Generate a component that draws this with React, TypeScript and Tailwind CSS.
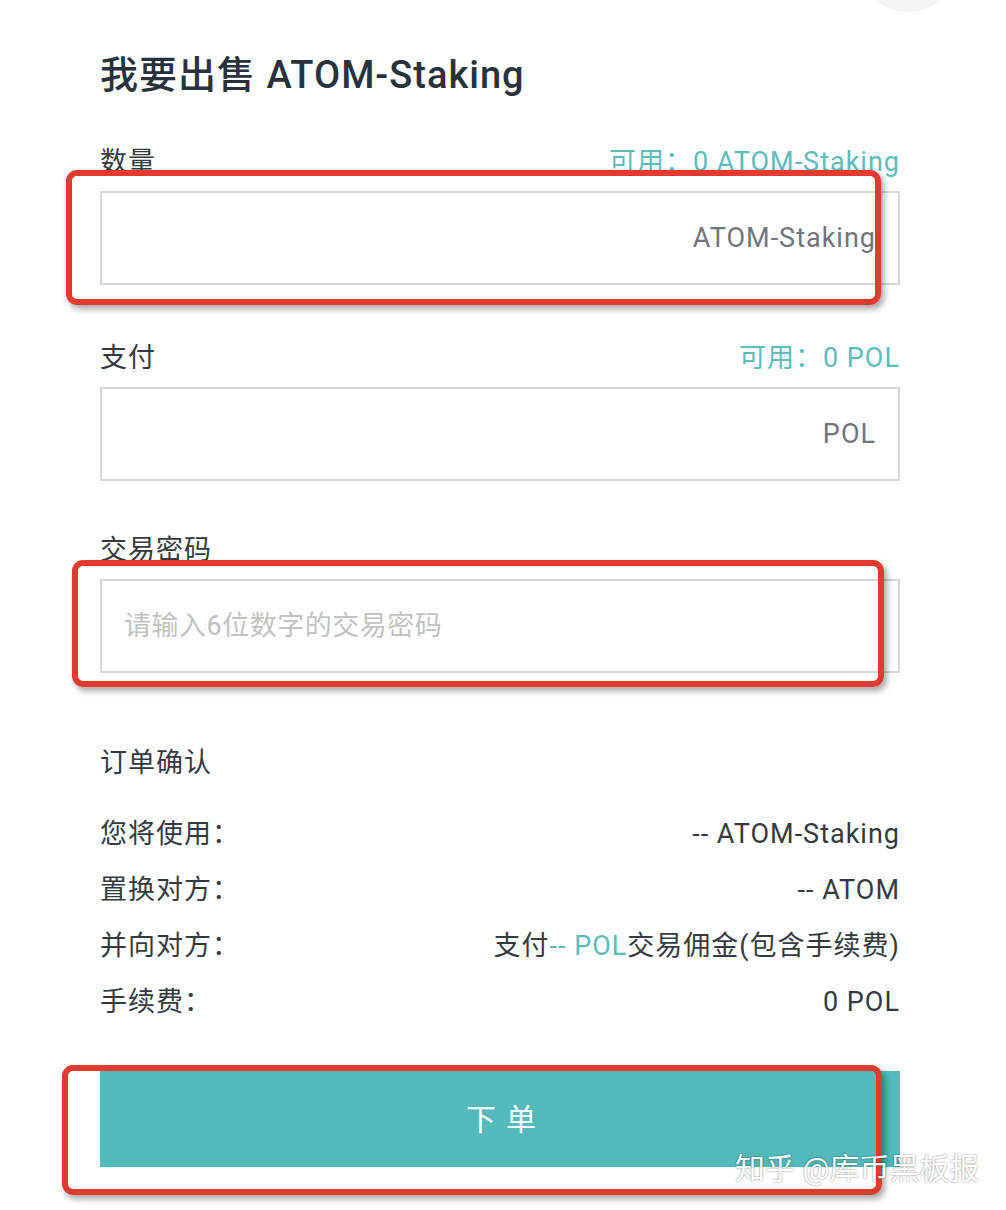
const font = { fontFamily: '"Roboto", "Noto Sans CJK SC", sans-serif' };

type FieldProps = {
  label: string;
  avail?: string;
  suffix?: string;
  placeholder?: string;
  className?: string;
};

function Field({ label, avail, suffix, placeholder, className }: FieldProps) {
  return (
    <div className={className}>
      <div className="flex h-[30px] items-center justify-between">
        <span className="text-[27px] tracking-[1px] text-[#333a40]">{label}</span>
        {avail && <span className="text-[27px] tracking-[1px] text-[#5dbcbc]">{avail}</span>}
      </div>
      <div className="mt-[14px] flex h-[94px] items-center border-2 border-[#d6d6d6] px-[22px]">
        {placeholder && <span className="text-[27px] tracking-[0.5px] text-[#c2c2c2]">{placeholder}</span>}
        {suffix && <span className="ml-auto text-[27px] tracking-[1px] text-[#6f757b]">{suffix}</span>}
      </div>
    </div>
  );
}

function Row({ label, children }: { label: string; children: React.ReactNode }) {
  return (
    <div className="flex h-[56px] items-center justify-between text-[27px] tracking-[1px] text-[#333a40]">
      <span>{label}</span>
      <span>{children}</span>
    </div>
  );
}

function Mark({ className }: { className: string }) {
  return (
    <div
      className={`pointer-events-none absolute rounded-[11px] border-[6px] border-[#e23b2e] shadow-[3px_4px_6px_rgba(0,0,0,0.35)] ${className}`}
    />
  );
}

export default function App() {
  return (
    <div className="relative h-[1210px] w-[1006px] overflow-hidden bg-white" style={font}>
      <div className="absolute left-[858px] top-[-88px] h-[100px] w-[100px] rounded-full bg-[#f3f4f5]" />

      <div className="relative w-[900px] pl-[100px] pt-[51px]">
        <h1 className="h-[48px] text-[38px] font-medium leading-[48px] tracking-[1px] text-[#28323c]">
          我要出售 ATOM-Staking
        </h1>

        <Field className="mt-[48px]" label="数量" avail="可用：0 ATOM-Staking" suffix="ATOM-Staking" />
        <Field className="mt-[58px]" label="支付" avail="可用：0 POL" suffix="POL" />
        <Field className="mt-[54px]" label="交易密码" placeholder="请输入6位数字的交易密码" />

        <div className="mt-[75px] flex h-[30px] items-center text-[27px] tracking-[1px] text-[#333a40]">订单确认</div>
        <div className="mt-[28px]">
          <Row label="您将使用：">-- ATOM-Staking</Row>
          <Row label="置换对方：">-- ATOM</Row>
          <Row label="并向对方：">
            支付<span className="text-[#5dbcbc]">-- POL</span>交易佣金(包含手续费)
          </Row>
          <Row label="手续费：">0 POL</Row>
        </div>

        <button className="mt-[41px] flex h-[96px] w-full items-center justify-center bg-[#53b9bb] pl-[12px] text-[30px] tracking-[10px] text-white">
          下单
        </button>
      </div>

      <Mark className="left-[66px] top-[170px] h-[135px] w-[815px]" />
      <Mark className="left-[72px] top-[560px] h-[127px] w-[812px]" />
      <Mark className="left-[62px] top-[1065px] h-[130px] w-[820px]" />

      <div className="absolute left-[735px] top-[1146px] text-[30px] text-white [text-shadow:0_0_2px_rgba(0,0,0,0.55)]">
        知乎 @库币黑板报
      </div>
    </div>
  );
}
